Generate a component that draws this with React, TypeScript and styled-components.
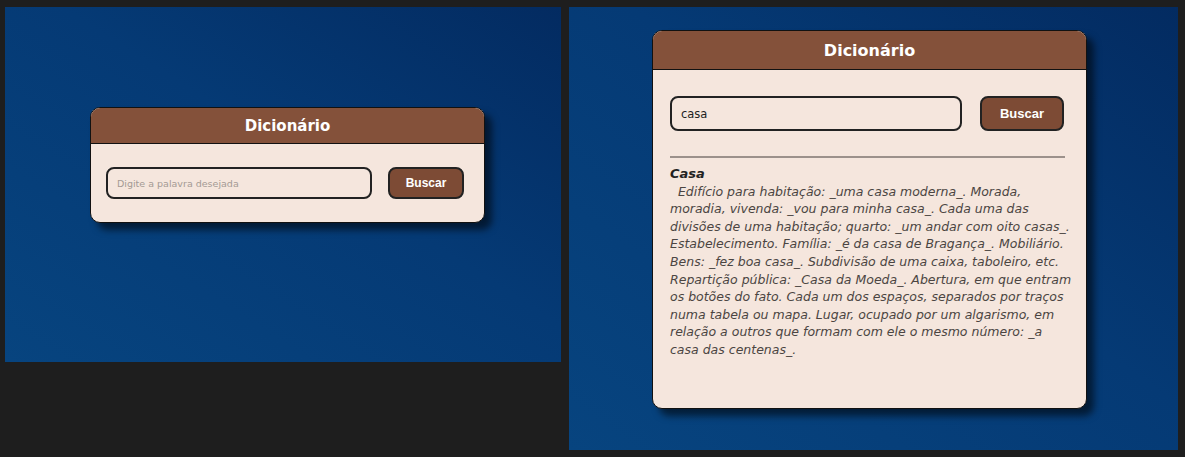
import React from 'react';
import styled, { createGlobalStyle } from 'styled-components';

const GlobalStyle = createGlobalStyle`
  html, body {
    margin: 0;
    padding: 0;
    background: #1e1e1e;
  }
  body {
    font-family: "DejaVu Sans", Verdana, sans-serif;
  }
`;

const Page = styled.div`
  display: flex;
  align-items: flex-start;
  gap: 8px;
  padding: 7px 5px;
  width: 1185px;
  height: 457px;
  box-sizing: border-box;
`;

const Panel = styled.div<{ $w: number; $h: number; $pad: string }>`
  width: ${p => p.$w}px;
  height: ${p => p.$h}px;
  padding: ${p => p.$pad};
  box-sizing: border-box;
  background: linear-gradient(to bottom left, #032b61 0%, #053a75 45%, #07447f 100%);
`;

const Card = styled.div<{ $w: number; $h?: number }>`
  width: ${p => p.$w}px;
  height: ${p => (p.$h ? `${p.$h}px` : 'auto')};
  box-sizing: border-box;
  display: flex;
  flex-direction: column;
  background: #f5e6dd;
  border: 1.5px solid #111;
  border-radius: 10px;
  overflow: hidden;
  box-shadow: 7px 7px 7px rgba(0, 0, 0, 0.55);
`;

const CardHeader = styled.div<{ $h: number; $fs: number }>`
  height: ${p => p.$h}px;
  display: flex;
  align-items: center;
  justify-content: center;
  background: #84513a;
  border-bottom: 1.5px solid #111;
  color: #fff;
  font-weight: bold;
  font-size: ${p => p.$fs}px;
`;

const CardBody = styled.div<{ $pad: string }>`
  padding: ${p => p.$pad};
  display: flex;
  flex-direction: column;
`;

const SearchRow = styled.div<{ $gap: number }>`
  display: flex;
  gap: ${p => p.$gap}px;
`;

const SearchInput = styled.input<{ $w: number; $h: number; $fs: number }>`
  width: ${p => p.$w}px;
  height: ${p => p.$h}px;
  box-sizing: border-box;
  padding: 0 9px;
  border: 2px solid #222;
  border-radius: 8px;
  background: #f5e6dd;
  color: #222;
  font-family: "DejaVu Sans", Verdana, sans-serif;
  font-size: ${p => p.$fs}px;
  outline: none;
  &::placeholder {
    color: #a49a94;
  }
`;

const SearchButton = styled.button<{ $w: number; $h: number; $fs: number }>`
  width: ${p => p.$w}px;
  height: ${p => p.$h}px;
  border: 2px solid #222;
  border-radius: 8px;
  background: #7d4b35;
  color: #fff;
  font-family: "Liberation Sans", Arial, sans-serif;
  font-weight: bold;
  font-size: ${p => p.$fs}px;
  cursor: pointer;
`;

const Divider = styled.hr`
  margin: 25px 0 7px;
  width: 395px;
  border: none;
  border-top: 2px solid #9c918b;
`;

const Result = styled.div`
  font-style: italic;
  font-size: 12.5px;
  line-height: 17.6px;
  color: #4b4542;
`;

const Word = styled.div`
  font-weight: bold;
  font-size: 13px;
  color: #222;
`;

const Line = styled.div`
  white-space: pre;
`;

const lines = [
  '  Edifício para habitação: _uma casa moderna_. Morada,',
  'moradia, vivenda: _vou para minha casa_. Cada uma das',
  'divisões de uma habitação; quarto: _um andar com oito casas_.',
  'Estabelecimento. Família: _é da casa de Bragança_. Mobiliário.',
  'Bens: _fez boa casa_. Subdivisão de uma caixa, taboleiro, etc.',
  'Repartição pública: _Casa da Moeda_. Abertura, em que entram',
  'os botões do fato. Cada um dos espaços, separados por traços',
  'numa tabela ou mapa. Lugar, ocupado por um algarismo, em',
  'relação a outros que formam com ele o mesmo número: _a',
  'casa das centenas_.',
];

export default function App() {
  return (
    <>
      <GlobalStyle />
      <Page>
        <Panel $w={556} $h={355} $pad="100px 0 0 85px">
          <Card $w={395}>
            <CardHeader $h={35} $fs={15}>Dicionário</CardHeader>
            <CardBody $pad="23px 20px 23px 15px">
              <SearchRow $gap={16}>
                <SearchInput $w={266} $h={32} $fs={9.5} placeholder="Digite a palavra desejada" />
                <SearchButton $w={76} $h={32} $fs={12}>Buscar</SearchButton>
              </SearchRow>
            </CardBody>
          </Card>
        </Panel>
        <Panel $w={609} $h={443} $pad="23px 0 0 83px">
          <Card $w={435} $h={379}>
            <CardHeader $h={38} $fs={16}>Dicionário</CardHeader>
            <CardBody $pad="26px 22px 0 17px">
              <SearchRow $gap={18}>
                <SearchInput $w={292} $h={35} $fs={11.5} defaultValue="casa" />
                <SearchButton $w={84} $h={35} $fs={13}>Buscar</SearchButton>
              </SearchRow>
              <Divider />
              <Result>
                <Word>Casa</Word>
                {lines.map((l, i) => (
                  <Line key={i}>{l}</Line>
                ))}
              </Result>
            </CardBody>
          </Card>
        </Panel>
      </Page>
    </>
  );
}
